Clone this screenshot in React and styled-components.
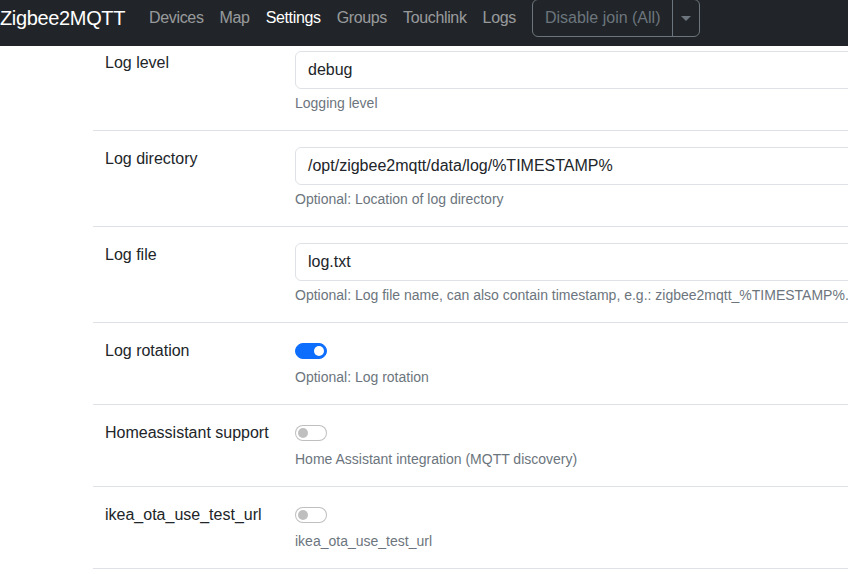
import React from "react";
import styled, { createGlobalStyle } from "styled-components";

const GlobalStyle = createGlobalStyle`
  html, body {
    margin: 0;
    padding: 0;
    overflow: hidden;
    background: #fff;
  }
  body {
    font-family: "Liberation Sans", Arial, sans-serif;
    font-size: 16px;
    line-height: 1.5;
    color: #212529;
  }
  * { box-sizing: border-box; }
`;

const Navbar = styled.nav`
  display: flex;
  align-items: center;
  height: 46px;
  padding: 0 0 10px 0;
  background: #212529;
  letter-spacing: -0.35px;
`;

const Brand = styled.span`
  font-size: 20px;
  line-height: 30px;
  color: #fff;
  margin-right: 16px;
  white-space: nowrap;
`;

const NavLink = styled.a`
  padding: 8px;
  color: ${(p) => (p.$active ? "#fff" : "rgba(255,255,255,0.55)")};
  text-decoration: none;
  white-space: nowrap;
`;

const SplitButton = styled.div`
  display: flex;
  height: 38px;
  margin-left: 8px;
  border: 1px solid #6c757d;
  border-radius: 6px;
  color: #6c757d;
  letter-spacing: 0;
`;

const JoinButton = styled.span`
  display: flex;
  align-items: center;
  padding: 0 12px;
  white-space: nowrap;
`;

const Caret = styled.span`
  display: flex;
  align-items: center;
  justify-content: center;
  width: 27px;
  border-left: 1px solid #6c757d;
  &::after {
    content: "";
    border-top: 5px solid #6c757d;
    border-left: 5px solid transparent;
    border-right: 5px solid transparent;
  }
`;

const Main = styled.main`
  padding-left: 93px;
  width: 1200px;
`;

const Row = styled.div`
  display: grid;
  grid-template-columns: 190px 1fr;
  padding: ${(p) => (p.$first ? "5px" : "16px")} 0 16px;
  border-bottom: 1px solid #dee2e6;
`;

const Label = styled.label`
  padding: 0 12px;
  line-height: 24px;
  white-space: nowrap;
`;

const Field = styled.div`
  padding: 0 12px;
`;

const Input = styled.div`
  height: 38px;
  padding: 0 12px;
  display: flex;
  align-items: center;
  border: 1px solid #dee2e6;
  border-radius: 6px;
  background: #fff;
`;

const SwitchLine = styled.div`
  min-height: 24px;
  padding-top: 4px;
`;

const Switch = styled.span`
  display: block;
  position: relative;
  width: 32px;
  height: 16px;
  border-radius: 8px;
  border: 1px solid ${(p) => (p.$on ? "#0d6efd" : "rgba(0,0,0,0.25)")};
  background: ${(p) => (p.$on ? "#0d6efd" : "#fff")};
  &::after {
    content: "";
    position: absolute;
    top: 2px;
    left: ${(p) => (p.$on ? "18px" : "2px")};
    width: 10px;
    height: 10px;
    border-radius: 50%;
    background: ${(p) => (p.$on ? "#fff" : "rgba(0,0,0,0.25)")};
  }
`;

const Help = styled.div`
  margin-top: 4px;
  font-size: 14px;
  line-height: 21px;
  color: #6c757d;
  white-space: nowrap;
`;

const links = ["Devices", "Map", "Settings", "Groups", "Touchlink", "Logs"];

const settings = [
  { label: "Log level", value: "debug", help: "Logging level" },
  {
    label: "Log directory",
    value: "/opt/zigbee2mqtt/data/log/%TIMESTAMP%",
    help: "Optional: Location of log directory",
  },
  {
    label: "Log file",
    value: "log.txt",
    help: "Optional: Log file name, can also contain timestamp, e.g.: zigbee2mqtt_%TIMESTAMP%.log",
  },
  { label: "Log rotation", toggle: true, on: true, help: "Optional: Log rotation" },
  {
    label: "Homeassistant support",
    toggle: true,
    on: false,
    help: "Home Assistant integration (MQTT discovery)",
  },
  { label: "ikea_ota_use_test_url", toggle: true, on: false, help: "ikea_ota_use_test_url" },
];

export default function App() {
  return (
    <>
      <GlobalStyle />
      <Navbar>
        <Brand>Zigbee2MQTT</Brand>
        {links.map((l) => (
          <NavLink key={l} $active={l === "Settings"}>
            {l}
          </NavLink>
        ))}
        <SplitButton>
          <JoinButton>Disable join (All)</JoinButton>
          <Caret />
        </SplitButton>
      </Navbar>
      <Main>
        {settings.map((s, i) => (
          <Row key={s.label} $first={i === 0}>
            <Label>{s.label}</Label>
            <Field>
              {s.toggle ? (
                <SwitchLine>
                  <Switch $on={s.on} />
                </SwitchLine>
              ) : (
                <Input>{s.value}</Input>
              )}
              <Help>{s.help}</Help>
            </Field>
          </Row>
        ))}
      </Main>
    </>
  );
}
